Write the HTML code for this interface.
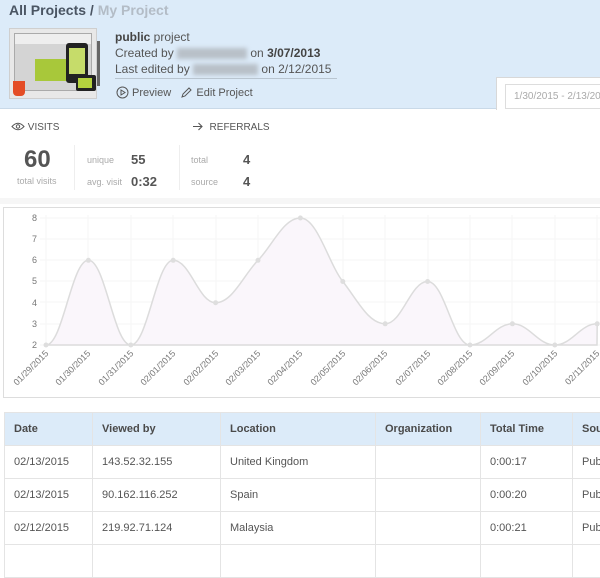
<!DOCTYPE html>
<html><head><style>
*{margin:0;padding:0;box-sizing:border-box}
body{width:600px;height:550px;overflow:hidden;background:#fff;font-family:"Liberation Sans",sans-serif;color:#555;position:relative}
.hdr{position:absolute;left:0;top:0;width:600px;height:109px;background:#dcebf9;border-bottom:1px solid #c9d9e8}
.abs{position:absolute;white-space:nowrap}
.blur{display:inline-block;background:#b8c0c8;filter:blur(2px);height:11px;vertical-align:middle}
table{border-collapse:collapse;position:absolute;left:4px;top:412px;font-size:11px;table-layout:fixed;width:660px}
td,th{border:1px solid #e4e4e4;height:33px;padding-left:9px;text-align:left;overflow:hidden;white-space:nowrap}
th{background:#dcebf9;font-weight:bold;color:#4a4a4a}
td{color:#555}
</style></head><body>
<div class="hdr"></div>
<div class="abs" style="left:9px;top:2px;font-size:14px;font-weight:bold;color:#4a5563">All Projects / <span style="color:#b3bcc6">My Project</span></div>
<div class="abs" style="left:9px;top:28px;width:88px;height:71px;background:#e8e8e8;border:1px solid #cfcfcf">
 <div class="abs" style="left:4px;top:4px;width:78px;height:58px;background:#d4d4d4;border:1px solid #aaa"></div>
 <div class="abs" style="left:5px;top:5px;width:76px;height:10px;background:#eee"></div>
 <div class="abs" style="left:25px;top:30px;width:32px;height:22px;background:#a8c83a"></div>
 <div class="abs" style="left:56px;top:14px;width:22px;height:40px;background:#222;border-radius:3px"></div>
 <div class="abs" style="left:59px;top:19px;width:16px;height:26px;background:#c6dc6a"></div>
 <div class="abs" style="left:66px;top:46px;width:20px;height:16px;background:#222;border-radius:2px"></div>
 <div class="abs" style="left:68px;top:49px;width:14px;height:10px;background:#b4d23e"></div>
 <div class="abs" style="left:3px;top:52px;width:12px;height:15px;background:#e44d26;border-radius:0 0 4px 4px"></div>
 <div class="abs" style="left:87px;top:12px;width:3px;height:45px;background:#666"></div>
</div>
<div class="abs" style="left:115px;top:29px;font-size:12px;line-height:16px;color:#555">
<b style="color:#444">public</b> project<br>
Created by <span class="blur" style="width:70px"></span> on <b style="color:#444">3/07/2013</b><br>
Last edited by <span class="blur" style="width:65px"></span> on 2/12/2015</div>
<div class="abs" style="left:115px;top:78px;width:222px;border-top:1px solid #b9c5d0"></div>
<div class="abs" style="left:116px;top:86px;font-size:11px;color:#555">
<svg width="13" height="13" viewBox="0 0 13 13" style="vertical-align:-3px"><circle cx="6.5" cy="6.5" r="5.5" fill="none" stroke="#555" stroke-width="1"/><path d="M5 4v5l4-2.5z" fill="none" stroke="#555"/></svg> Preview
&nbsp;&nbsp;<svg width="13" height="13" viewBox="0 0 13 13" style="vertical-align:-3px"><path d="M2 11l1-3 6-6 2 2-6 6z" fill="none" stroke="#555"/></svg> Edit Project</div>
<div class="abs" style="left:496px;top:77px;width:104px;height:33px;background:#fff;border-left:1px solid #d8d8d8;border-top:1px solid #d8d8d8"></div>
<div class="abs" style="left:505px;top:84px;width:100px;height:25px;border:1px solid #ddd;font-size:10px;color:#aaa;padding:6px 0 0 8px">1/30/2015 - 2/13/2015</div>

<div class="abs" style="left:11px;top:122px;font-size:10px;color:#555"><svg width="14" height="9" viewBox="0 0 14 9" style="vertical-align:-1px"><path d="M1 4.5Q7-2 13 4.5Q7 11 1 4.5z" fill="none" stroke="#555"/><circle cx="7" cy="4.5" r="1.7" fill="none" stroke="#555"/></svg> VISITS</div>
<div class="abs" style="left:192px;top:122px;font-size:10px;color:#555"><svg width="12" height="9" viewBox="0 0 12 9" style="vertical-align:-1px"><path d="M1 4.5h9M6.5 1l3.5 3.5-3.5 3.5" fill="none" stroke="#555" stroke-width="1.1"/></svg>&nbsp; REFERRALS</div>
<div class="abs" style="left:24px;top:146px;font-size:24px;font-weight:bold;color:#555">60</div>
<div class="abs" style="left:17px;top:176px;font-size:9px;color:#aaa">total visits</div>
<div class="abs" style="left:74px;top:145px;height:45px;border-left:1px solid #eee"></div>
<div class="abs" style="left:87px;top:155px;font-size:9px;color:#aaa">unique</div>
<div class="abs" style="left:131px;top:152px;font-size:13px;font-weight:bold;color:#555">55</div>
<div class="abs" style="left:87px;top:177px;font-size:9px;color:#aaa">avg. visit</div>
<div class="abs" style="left:131px;top:174px;font-size:13px;font-weight:bold;color:#555">0:32</div>
<div class="abs" style="left:179px;top:145px;height:45px;border-left:1px solid #eee"></div>
<div class="abs" style="left:191px;top:155px;font-size:9px;color:#aaa">total</div>
<div class="abs" style="left:243px;top:152px;font-size:13px;font-weight:bold;color:#555">4</div>
<div class="abs" style="left:191px;top:177px;font-size:9px;color:#aaa">source</div>
<div class="abs" style="left:243px;top:174px;font-size:13px;font-weight:bold;color:#555">4</div>
<div class="abs" style="left:0;top:198px;width:600px;height:6px;background:#f6f6f6"></div>

<svg class="abs" style="left:0;top:0" width="600" height="550">
<rect x="3.5" y="207.5" width="600" height="190" fill="#fff" stroke="#ddd"/>
<g stroke="#f5f5f5" stroke-width="1">
<line x1="40" y1="218" x2="600" y2="218"/><line x1="40" y1="239" x2="600" y2="239"/><line x1="40" y1="260" x2="600" y2="260"/><line x1="40" y1="281" x2="600" y2="281"/><line x1="40" y1="302" x2="600" y2="302"/><line x1="40" y1="324" x2="600" y2="324"/><line x1="40" y1="345" x2="600" y2="345"/>
<line x1="46" y1="215" x2="46" y2="345"/><line x1="88" y1="215" x2="88" y2="345"/><line x1="131" y1="215" x2="131" y2="345"/><line x1="173" y1="215" x2="173" y2="345"/><line x1="216" y1="215" x2="216" y2="345"/><line x1="258" y1="215" x2="258" y2="345"/><line x1="300" y1="215" x2="300" y2="345"/><line x1="343" y1="215" x2="343" y2="345"/><line x1="385" y1="215" x2="385" y2="345"/><line x1="428" y1="215" x2="428" y2="345"/><line x1="470" y1="215" x2="470" y2="345"/><line x1="512" y1="215" x2="512" y2="345"/><line x1="555" y1="215" x2="555" y2="345"/><line x1="597" y1="215" x2="597" y2="345"/>
</g>
<path d="M46,345 C63,345 71.4,260.3 88.4,260.3 C105.4,260.3 113.8,345 130.8,345 C147.8,345 156.2,260.3 173.2,260.3 C190.2,260.3 198.6,302.7 215.6,302.7 C232.6,302.7 244,274.3 258,260.3 C272,246.3 283.4,218 300.4,218 C317.4,218 328.8,264 342.8,281.5 C356.8,299 368.2,323.8 385.2,323.8 C402.2,323.8 410.6,281.5 427.6,281.5 C444.6,281.5 453,345 470,345 C487,345 495.4,323.8 512.4,323.8 C529.4,323.8 537.8,345 554.8,345 C571.8,345 580.2,323.8 597.2,323.8 L597,345 Z" fill="#faf6fb" stroke="#dcdcdc" stroke-width="1.5"/>
<g fill="#dedede">
<circle cx="46" cy="345" r="2.5"/><circle cx="88.4" cy="260.3" r="2.5"/><circle cx="130.8" cy="345" r="2.5"/><circle cx="173.2" cy="260.3" r="2.5"/><circle cx="215.6" cy="302.7" r="2.5"/><circle cx="258" cy="260.3" r="2.5"/><circle cx="300.4" cy="218" r="2.5"/><circle cx="342.8" cy="281.5" r="2.5"/><circle cx="385.2" cy="323.8" r="2.5"/><circle cx="427.6" cy="281.5" r="2.5"/><circle cx="470" cy="345" r="2.5"/><circle cx="512.4" cy="323.8" r="2.5"/><circle cx="554.8" cy="345" r="2.5"/><circle cx="597.2" cy="323.8" r="2.5"/>
</g>
<g font-family="Liberation Sans" font-size="9" fill="#777" text-anchor="end">
<text x="37" y="221">8</text><text x="37" y="242">7</text><text x="37" y="263">6</text><text x="37" y="284">5</text><text x="37" y="306">4</text><text x="37" y="327">3</text><text x="37" y="348">2</text>
<text transform="translate(49,354) rotate(-45)">01/29/2015</text>
<text transform="translate(91,354) rotate(-45)">01/30/2015</text>
<text transform="translate(134,354) rotate(-45)">01/31/2015</text>
<text transform="translate(176,354) rotate(-45)">02/01/2015</text>
<text transform="translate(219,354) rotate(-45)">02/02/2015</text>
<text transform="translate(261,354) rotate(-45)">02/03/2015</text>
<text transform="translate(303,354) rotate(-45)">02/04/2015</text>
<text transform="translate(346,354) rotate(-45)">02/05/2015</text>
<text transform="translate(388,354) rotate(-45)">02/06/2015</text>
<text transform="translate(431,354) rotate(-45)">02/07/2015</text>
<text transform="translate(473,354) rotate(-45)">02/08/2015</text>
<text transform="translate(515,354) rotate(-45)">02/09/2015</text>
<text transform="translate(558,354) rotate(-45)">02/10/2015</text>
<text transform="translate(600,354) rotate(-45)">02/11/2015</text>
</g>
</svg>

<table>
<colgroup><col style="width:88px"><col style="width:128px"><col style="width:155px"><col style="width:105px"><col style="width:92px"><col style="width:92px"></colgroup>
<tr><th>Date</th><th>Viewed by</th><th>Location</th><th>Organization</th><th>Total Time</th><th>Source</th></tr>
<tr><td>02/13/2015</td><td>143.52.32.155</td><td>United Kingdom</td><td></td><td>0:00:17</td><td>Public</td></tr>
<tr><td>02/13/2015</td><td>90.162.116.252</td><td>Spain</td><td></td><td>0:00:20</td><td>Public</td></tr>
<tr><td>02/12/2015</td><td>219.92.71.124</td><td>Malaysia</td><td></td><td>0:00:21</td><td>Public</td></tr>
<tr><td></td><td></td><td></td><td></td><td></td><td></td></tr>
</table>
</body></html>
